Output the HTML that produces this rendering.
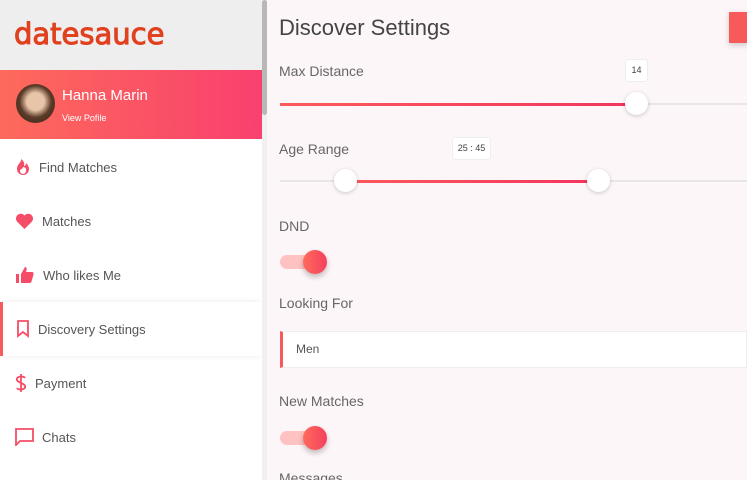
<!DOCTYPE html>
<html><head><meta charset="utf-8"><style>
*{box-sizing:border-box;margin:0;padding:0}
html,body{width:747px;height:480px;overflow:hidden}
body{background:#fdf6f8;font-family:"Liberation Sans",sans-serif;position:relative;color:#555}
.side{position:absolute;left:0;top:0;width:262px;height:480px;background:#fff}
.scroll{position:absolute;left:262px;top:0;width:5px;height:480px;background:#f0f0f0}
.scroll div{width:5px;height:115px;background:#b8b8b8;border-radius:3px}
.head{height:70px;background:#eeeeee;position:relative}
.logo{position:absolute;left:14px;top:17px;font-size:29px;font-weight:normal;color:#e0411f;font-family:"DejaVu Sans",sans-serif;-webkit-text-stroke:1px #e0411f}
.prof{height:69px;background:linear-gradient(90deg,#fd6a5b,#f9406e);position:relative;color:#fff}
.av{position:absolute;left:16px;top:14px;width:39px;height:39px;border-radius:50%;background:radial-gradient(circle at 50% 45%,#e8c4a8 0 30%,#5a3a28 55%,#3a2418 100%)}
.nm{position:absolute;left:62px;top:17px;font-size:15px}
.vp{position:absolute;left:62px;top:43px;font-size:9px}
.it{position:absolute;left:0;width:262px;height:54px;font-size:13px;color:#555;display:flex;align-items:center}
.it svg{margin-left:15px;margin-right:8px}
.act{background:#fff;box-shadow:0 0 6px rgba(0,0,0,.08);border-left:3px solid #f65a5a}
.lab{position:absolute;left:279px;font-size:14px;color:#666}
.track{position:absolute;left:280px;width:467px;height:2px;background:#e6e6e6}
.fill{position:absolute;height:3px;background:linear-gradient(90deg,#fb5b5b,#f2345f)}
.th{position:absolute;width:23px;height:23px;border-radius:50%;background:#fff;box-shadow:0 1px 4px rgba(0,0,0,.2)}
.tip{position:absolute;height:23px;background:#fff;border:1px solid #eee;border-radius:3px;font-size:9px;color:#444;text-align:center;line-height:21px}
.tg{position:absolute;left:280px;width:38px;height:14px;border-radius:7px;background:#ffc2c2}
.kn{position:absolute;width:24px;height:24px;border-radius:50%;background:linear-gradient(90deg,#fe6b5b,#f5405f);box-shadow:0 3px 6px rgba(0,0,0,.25)}
</style></head><body>
<div class="side">
<div class="head"><div class="logo">datesauce</div></div>
<div class="prof"><div class="av"></div><div class="nm">Hanna Marin</div><div class="vp">View Pofile</div></div>
<div class="it" style="top:140px"><svg width="16" height="18" viewBox="0 0 16 18"><path d="M6 1c1 3-4 5-4 10a6 6 0 0012 0c0-3-2-5-3-6 0 2-1 3-2 3 1-3-1-6-3-7zM8 9a3 3 0 013 4 3 3 0 01-6 0c0-2 3-2 3-4z" fill="#f54d67" fill-rule="evenodd"/></svg>Find Matches</div>
<div class="it" style="top:194px"><svg width="19" height="17" viewBox="0 0 19 17"><path d="M9.5 16L2 8.5A4.5 4.5 0 019.5 2.5 4.5 4.5 0 0117 8.5z" fill="#f54d67"/></svg>Matches</div>
<div class="it" style="top:248px"><svg width="20" height="18" viewBox="0 0 20 18"><path d="M1 8h3v9H1zM6 8l4-7c2 0 2 2 1 5h6c1 0 2 1 1.5 2.5l-2 7c-.3 1-1 1.5-2 1.5H6z" fill="#f54d67"/></svg>Who likes Me</div>
<div class="it act" style="top:302px"><svg width="14" height="18" viewBox="0 0 14 18" style="margin-left:13px"><path d="M2 1h10v15l-5-4-5 4z" fill="none" stroke="#f54d67" stroke-width="1.8"/></svg>Discovery Settings</div>
<div class="it" style="top:356px"><svg width="12" height="20" viewBox="0 0 12 20"><path d="M10 5C9 3 3 3 2 5.5S4 9 6 10s5 2 4 4.5S3 17 2 15M6 1v18" fill="none" stroke="#f54d67" stroke-width="1.8"/></svg>Payment</div>
<div class="it" style="top:410px"><svg width="19" height="18" viewBox="0 0 19 18"><path d="M1 1h17v12H5l-4 4z" fill="none" stroke="#f54d67" stroke-width="1.8"/></svg>Chats</div>
</div>
<div class="scroll"><div></div></div>
<div style="position:absolute;left:279px;top:15px;font-size:22px;color:#444">Discover Settings</div>
<div style="position:absolute;left:729px;top:12px;width:20px;height:31px;background:#f85a5a;box-shadow:0 2px 6px rgba(0,0,0,.2)"></div>
<div class="lab" style="top:63px">Max Distance</div>
<div class="tip" style="left:625px;top:59px;width:23px">14</div>
<div class="track" style="top:103px"></div>
<div class="fill" style="left:280px;top:103px;width:357px"></div>
<div class="th" style="left:625px;top:92px"></div>
<div class="lab" style="top:141px">Age Range</div>
<div class="tip" style="left:452px;top:137px;width:39px">25 : 45</div>
<div class="track" style="top:180px"></div>
<div class="fill" style="left:346px;top:180px;width:253px"></div>
<div class="th" style="left:334px;top:169px"></div>
<div class="th" style="left:587px;top:169px"></div>
<div class="lab" style="top:218px">DND</div>
<div class="tg" style="top:255px"></div><div class="kn" style="left:303px;top:250px"></div>
<div class="lab" style="top:295px">Looking For</div>
<div style="position:absolute;left:280px;top:331px;width:467px;height:37px;background:#fff;border:1px solid #eee;border-left:3px solid #f65a5a;font-size:12px;color:#555;padding-left:13px;line-height:35px">Men</div>
<div class="lab" style="top:393px">New Matches</div>
<div class="tg" style="top:431px"></div><div class="kn" style="left:303px;top:426px"></div>
<div class="lab" style="top:470px">Messages</div>
</body></html>
